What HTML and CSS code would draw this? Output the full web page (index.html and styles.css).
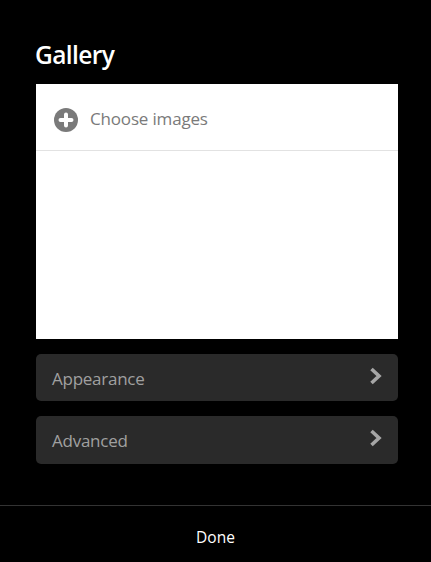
FILE: index.html
```html
<!DOCTYPE html>
<html lang="en">
<head>
    <meta charset="UTF-8">
    <meta name="viewport" content="width=device-width, initial-scale=1.0">
    <title>Gallery</title>
    <link rel="stylesheet" href="styles.css">
</head>
<body>

    <div class="content">
        <h1>Gallery</h1>

        <div class="picker">
            <div class="picker-head">
                <svg class="add-icon" width="24" height="24" viewBox="0 0 24 24">
                    <circle cx="12" cy="12" r="12" fill="#7a7a7a"/>
                    <path d="M12 6.5v11M6.5 12h11" stroke="#fff" stroke-width="4" stroke-linecap="round"/>
                </svg>
                <span>Choose images</span>
            </div>
        </div>

        <div class="section">
            <span>Appearance</span>
            <svg class="chevron" width="14" height="18" viewBox="0 0 14 18">
                <path d="M2.5 2l7.5 7-7.5 7" fill="none" stroke="#a6a6a6" stroke-width="3.6"/>
            </svg>
        </div>
        <div class="section">
            <span>Advanced</span>
            <svg class="chevron" width="14" height="18" viewBox="0 0 14 18">
                <path d="M2.5 2l7.5 7-7.5 7" fill="none" stroke="#a6a6a6" stroke-width="3.6"/>
            </svg>
        </div>
    </div>

    <footer>Done</footer>

</body>
</html>
```

FILE: styles.css
```css
html, body {
    height: 100%;
}
body {
    font-family: "Open Sans", "Noto Sans", sans-serif;
    margin: 0;
    background-color: #000;
    color: #fff;
    display: flex;
    flex-direction: column;
    overflow: hidden;
}
.content {
    flex: 1;
    padding: 36px 33px 0 36px;
}
h1 {
    margin: 0 0 10px -1px;
    font-size: 24.5px;
    line-height: 38px;
    font-weight: 600;
    letter-spacing: -0.6px;
}
.picker {
    height: 255px;
    background-color: #fff;
    margin-bottom: 14.5px;
}
.picker-head {
    height: 66px;
    padding: 0 18px;
    display: flex;
    align-items: center;
    gap: 12px;
    border-bottom: 1px solid #e2e2e2;
    color: #7a7a7a;
    font-size: 17px;
    letter-spacing: -0.17px;
}
.picker-head span {
    padding-top: 2px;
}
.add-icon {
    margin-top: 6px;
}
.section {
    height: 47.5px;
    margin-bottom: 15px;
    padding: 0 15px 0 16px;
    display: flex;
    align-items: center;
    justify-content: space-between;
    background-color: #2a2a2a;
    border-radius: 5px;
    color: #a0a0a0;
    font-size: 17px;
    letter-spacing: -0.25px;
}
.section span {
    padding-top: 2px;
}
.chevron {
    margin-top: -3px;
}
footer {
    height: 57px;
    padding-top: 5px;
    box-sizing: border-box;
    border-top: 1px solid #333;
    display: flex;
    align-items: center;
    justify-content: center;
    font-size: 15.5px;
}
```
